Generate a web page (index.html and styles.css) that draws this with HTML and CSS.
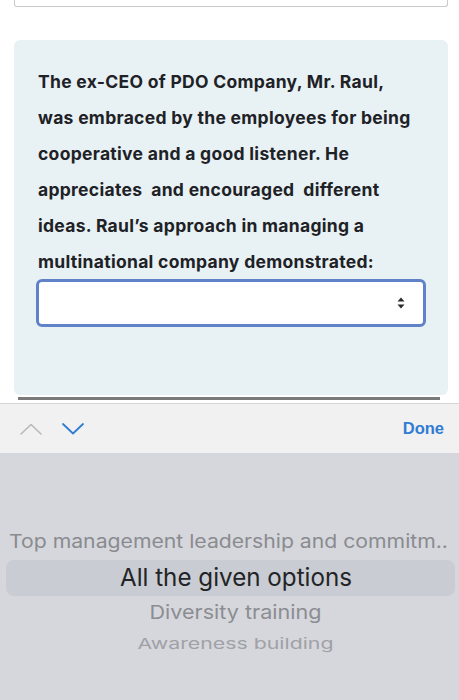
FILE: index.html
```html
<!DOCTYPE html>
<html>
<head>
<meta charset="utf-8">
<link rel="stylesheet" href="styles.css">
</head>
<body>
<div class="prev-box"></div>
<div class="card">
  <p class="question">The ex-CEO of PDO Company, Mr. Raul,<br>was embraced by the employees for being<br>cooperative and a good listener. He<br>appreciates&nbsp; and encouraged&nbsp; different<br>ideas. Raul’s approach in managing a<br>multinational company demonstrated:</p>
  <div class="select">
    <svg class="updown" width="10" height="14" viewBox="0 0 10 14"><path d="M5 1.5 L8.5 5.5 H1.5 Z M5 12.5 L8.5 8.5 H1.5 Z" fill="#2a2a2a"/></svg>
  </div>
</div>
<div class="scrollbar"></div>
<div class="toolbar">
  <div class="nav">
    <svg width="24" height="14" viewBox="0 0 24 14"><path d="M2 12 L12 2.5 L22 12" fill="none" stroke="#b9b9bc" stroke-width="1.6" stroke-linecap="round" stroke-linejoin="round"/></svg>
    <svg width="24" height="14" viewBox="0 0 24 14"><path d="M2 2 L12 11.5 L22 2" fill="none" stroke="#2f7cd3" stroke-width="1.8" stroke-linecap="round" stroke-linejoin="round"/></svg>
  </div>
  <span class="done">Done</span>
</div>
<div class="picker">
  <div class="opt opt-top">Top management leadership and commitm..</div>
  <div class="opt opt-sel">All the given options</div>
  <div class="opt opt-next">Diversity training</div>
  <div class="opt opt-far">Awareness building</div>
</div>
</body>
</html>
```
FILE: styles.css
```css
html, body {
  margin: 0;
  padding: 0;
  background: #ffffff;
}
body {
  width: 459px;
  height: 700px;
  overflow: hidden;
  font-family: "Liberation Sans", Arial, sans-serif;
}
.prev-box {
  margin: 0 11px 0 14px;
  height: 6px;
  border: 1px solid #c9c9c9;
  border-top: none;
  border-radius: 0 0 3px 3px;
  background: #fff;
}
.card {
  margin: 33px 11px 0 14px;
  background: #e8f1f4;
  border-radius: 6px;
  padding: 24px 22px 68px 22px;
}
.question {
  margin: 0;
  padding-left: 2px;
  font-family: Inter, "Liberation Sans", sans-serif;
  font-weight: 700;
  font-size: 17.5px;
  letter-spacing: 0.3px;
  line-height: 36px;
  color: #1e2226;
  white-space: nowrap;
}
.select {
  margin-top: -1px;
  height: 42px;
  border: 3px solid #5f82c8;
  border-radius: 6px;
  background: #ffffff;
  display: flex;
  align-items: center;
  justify-content: flex-end;
  padding-right: 17px;
}
.updown {
  display: block;
}
.scrollbar {
  margin: 2px 19px 0 18px;
  height: 3px;
  background: #7a7a7a;
}
.toolbar {
  margin-top: 3px;
  border-top: 1px solid #d6d6d8;
  height: 49px;
  background: #f1f1f2;
  display: flex;
  align-items: center;
  justify-content: space-between;
  padding: 0 15px 0 19px;
}
.nav {
  display: flex;
  gap: 18px;
  align-items: center;
}
.nav svg { display: block; }
.done {
  font-family: "Liberation Sans", Arial, sans-serif;
  font-weight: bold;
  font-size: 16.5px;
  color: #2f7cd3;
}
.picker {
  background: #d5d7dc;
  height: 247px;
  padding-top: 72px;
  box-sizing: border-box;
  font-family: Inter, "Liberation Sans", sans-serif;
  text-align: center;
}
.opt {
  white-space: nowrap;
}
.opt-top {
  height: 33px;
  line-height: 33px;
  font-size: 21.2px;
  color: #8a8b8f;
  text-align: left;
  padding-left: 9px;
  transform: scaleY(0.88);
}
.opt-sel {
  margin: 2px 4px 0 6px;
  padding-left: 11px;
  height: 36px;
  line-height: 36px;
  border-radius: 8px;
  background: #c9ccd2;
  font-size: 24.2px;
  color: #232427;
}
.opt-next {
  padding-left: 12px;
  height: 32px;
  line-height: 32px;
  font-size: 21.6px;
  color: #8c8d92;
  transform: scaleY(0.88);
}
.opt-far {
  padding-left: 12px;
  height: 30px;
  line-height: 30px;
  font-size: 21.3px;
  color: #a0a1a6;
  transform: scaleY(0.7);
}
```
